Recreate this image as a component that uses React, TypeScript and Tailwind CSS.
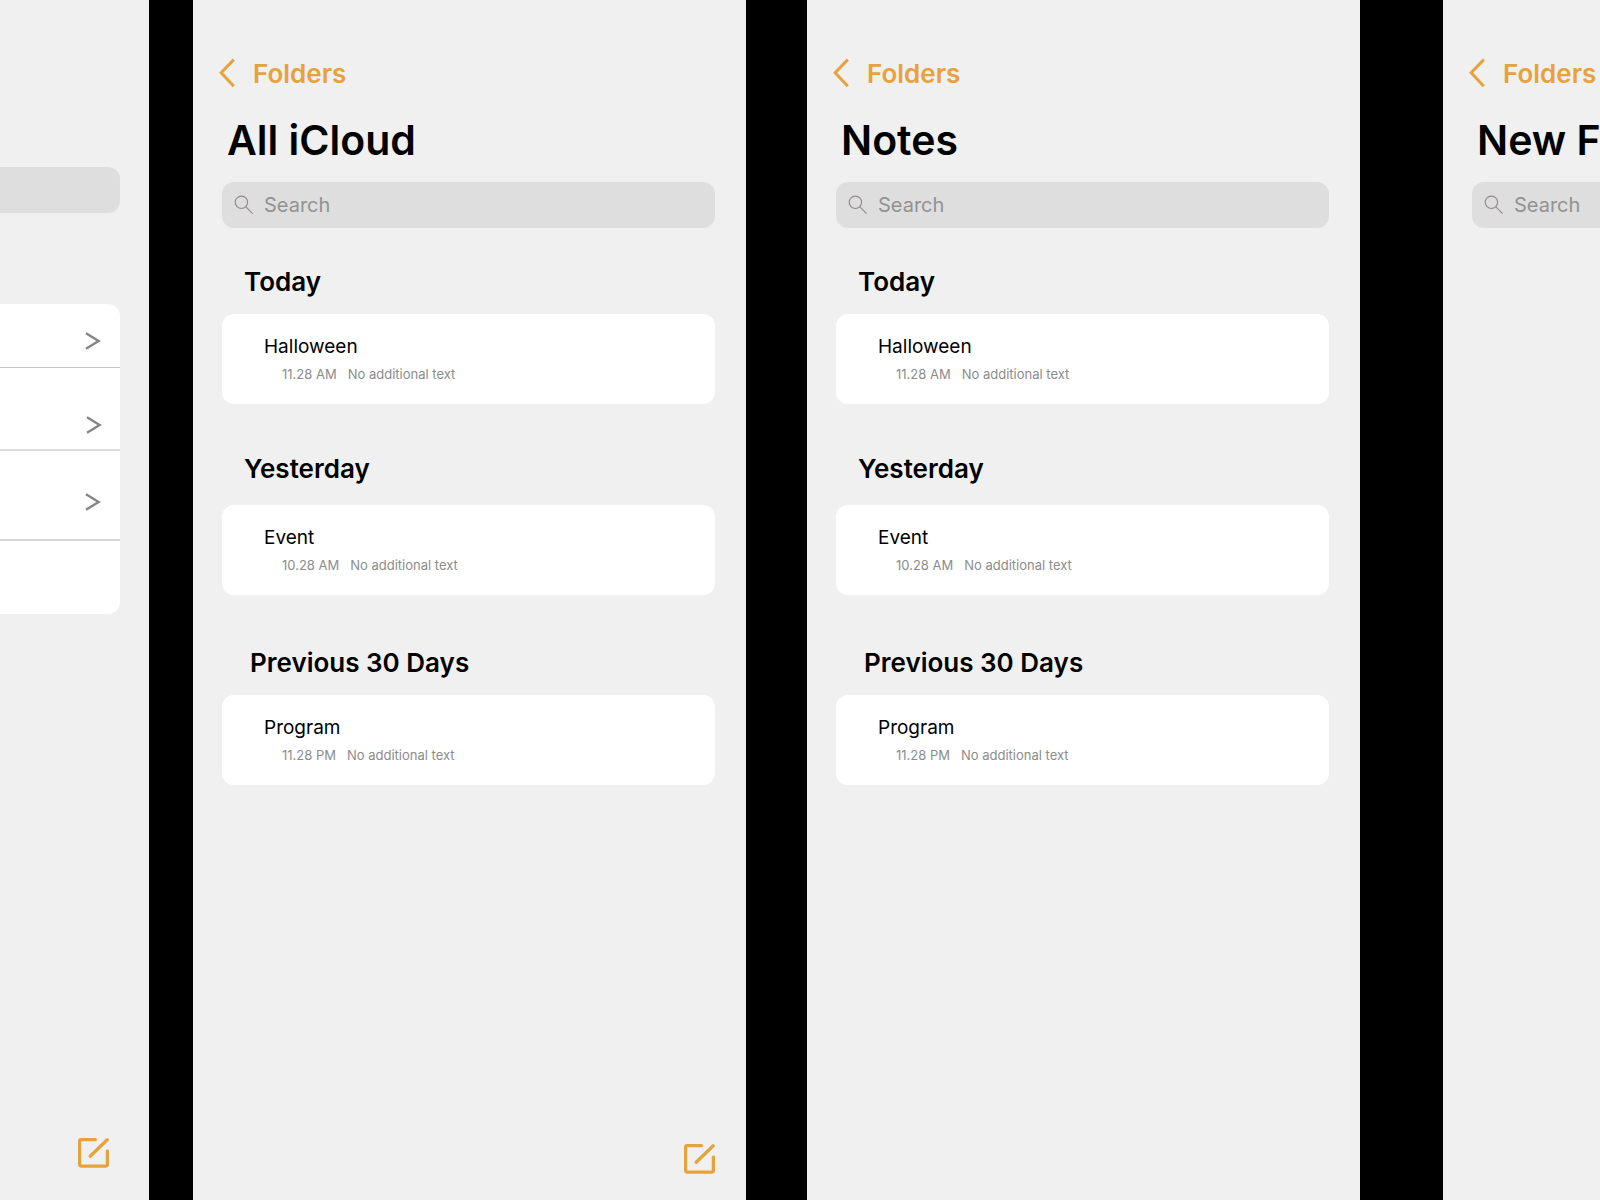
import type { ReactNode } from 'react';

type Note = { title: string; time: string };
type Section = {
  heading: string;
  headingClass: string;
  note: Note;
};

const sections: Section[] = [
  {
    heading: 'Today',
    headingClass: 'mt-[38px] mb-4 pl-[22px]',
    note: { title: 'Halloween', time: '11.28 AM' },
  },
  {
    heading: 'Yesterday',
    headingClass: 'mt-[49px] mb-5 pl-[22px]',
    note: { title: 'Event', time: '10.28 AM' },
  },
  {
    heading: 'Previous 30 Days',
    headingClass: 'mt-[52px] mb-4 pl-7',
    note: { title: 'Program', time: '11.28 PM' },
  },
];

function BackIcon() {
  return (
    <svg className="h-[30px] w-4 shrink-0" viewBox="0 0 16 30" fill="none" stroke="currentColor" strokeWidth="3" aria-hidden="true">
      <path d="M14.8 1.6 2.2 14.8 14.8 28.2" />
    </svg>
  );
}

function SearchIcon() {
  return (
    <svg className="h-5 w-5 shrink-0" viewBox="0 0 20 20" fill="none" stroke="#928888" strokeWidth="1.1" aria-hidden="true">
      <circle cx="7.4" cy="7.3" r="6.2" />
      <path d="M11.9 11.8 18.6 18.6" />
    </svg>
  );
}

function ForwardIcon() {
  return (
    <svg className="h-[18px] w-4" viewBox="0 0 16 18" fill="none" stroke="#858585" strokeWidth="2.4" aria-hidden="true">
      <path d="M1 1.2 13.6 9 1 16.8" />
    </svg>
  );
}

function ComposeButton({ className }: { className: string }) {
  return (
    <button type="button" aria-label="New note" className={`mt-auto self-end text-[#e6a23c] ${className}`}>
      <svg
        className="block h-[30px] w-[31px]"
        viewBox="0 0 31 30"
        fill="none"
        stroke="currentColor"
        strokeWidth="3.3"
        strokeLinecap="round"
        strokeLinejoin="round"
      >
        <path d="M17.4 1.7H3.2Q1.6 1.7 1.6 3.3V26.6Q1.6 28.2 3.2 28.2H27.8Q29.4 28.2 29.4 26.6V13.2" />
        <path d="M29.2 1.8 12.2 18.2" />
      </svg>
    </button>
  );
}

function SearchBox({ id, className }: { id: string; className: string }) {
  return (
    <label htmlFor={id} className={`flex h-[46px] items-center gap-[10px] bg-[#dedede] pl-3 ${className}`}>
      <SearchIcon />
      <input
        id={id}
        type="text"
        placeholder="Search"
        aria-label="Search"
        className="h-full w-full min-w-0 bg-transparent text-[20px] text-[#929292] outline-none placeholder:text-[#929292]"
      />
    </label>
  );
}

type ScreenProps = { id: string; title: string; bleedRight?: boolean; children?: ReactNode };

function Screen({ id, title, bleedRight = false, children }: ScreenProps) {
  return (
    <section className={`flex min-w-0 flex-col overflow-hidden bg-[#f0f0f0] pt-[53px] pl-[29px] ${bleedRight ? 'pr-0' : 'pr-[31px]'}`}>
      <nav>
        <a href="#folders" className="-ml-[3px] flex h-10 items-center gap-[18px] text-[26px] font-semibold whitespace-nowrap text-[#e6a23c]">
          <BackIcon />
          Folders
        </a>
      </nav>
      <h1 className="mt-[21px] mb-4 pl-[5px] text-[41px] leading-[52px] font-semibold whitespace-nowrap">{title}</h1>
      <SearchBox id={id} className={bleedRight ? 'rounded-l-xl' : 'rounded-xl'} />
      {children}
    </section>
  );
}

function NoteSections() {
  return (
    <>
      {sections.map(({ heading, headingClass, note }) => (
        <div key={heading}>
          <h2 className={`text-[26px] leading-8 font-semibold ${headingClass}`}>{heading}</h2>
          <article className="rounded-xl bg-white py-[18px] pl-[42px]">
            <h3 className="text-[19px] leading-[30px]">{note.title}</h3>
            <p className="flex gap-[11px] pl-[18px] text-[13px] leading-6 text-[#8c8c8c]">
              <span>{note.time}</span>
              <span>No additional text</span>
            </p>
          </article>
        </div>
      ))}
    </>
  );
}

function FoldersScreen() {
  return (
    <section className="flex min-w-0 flex-col bg-[#f0f0f0] pt-[167px] pr-[29px]">
      <input type="text" aria-label="Search folders" className="h-[46px] w-full rounded-r-xl bg-[#dedede] outline-none" />
      <ul className="mt-[91px] rounded-r-xl bg-white">
        <li className="flex h-16 items-end justify-end border-b border-[#c4c4c4] pr-[19px] pb-[17px]">
          <ForwardIcon />
        </li>
        <li className="flex h-[83px] items-end justify-end border-b-2 border-[#dcdcdc] pr-[18px] pb-[15px]">
          <ForwardIcon />
        </li>
        <li className="flex h-[90px] items-end justify-end border-b-2 border-[#d6d6d6] pr-[19px] pb-7">
          <ForwardIcon />
        </li>
        <li className="h-[73px]" />
      </ul>
      <ComposeButton className="mr-[11px] mb-8" />
    </section>
  );
}

export default function App() {
  return (
    <main className="grid min-h-screen grid-cols-[minmax(0,149fr)_minmax(0,44fr)_minmax(0,553fr)_minmax(0,61fr)_minmax(0,553fr)_minmax(0,83fr)_minmax(0,157fr)] overflow-hidden bg-black font-['Inter',sans-serif] text-black">
      <FoldersScreen />
      <div />
      <Screen id="search-all" title="All iCloud">
        <NoteSections />
        <ComposeButton className="mb-[26px]" />
      </Screen>
      <div />
      <Screen id="search-notes" title="Notes">
        <NoteSections />
      </Screen>
      <div />
      <Screen id="search-new" title="New Folder" bleedRight />
    </main>
  );
}
